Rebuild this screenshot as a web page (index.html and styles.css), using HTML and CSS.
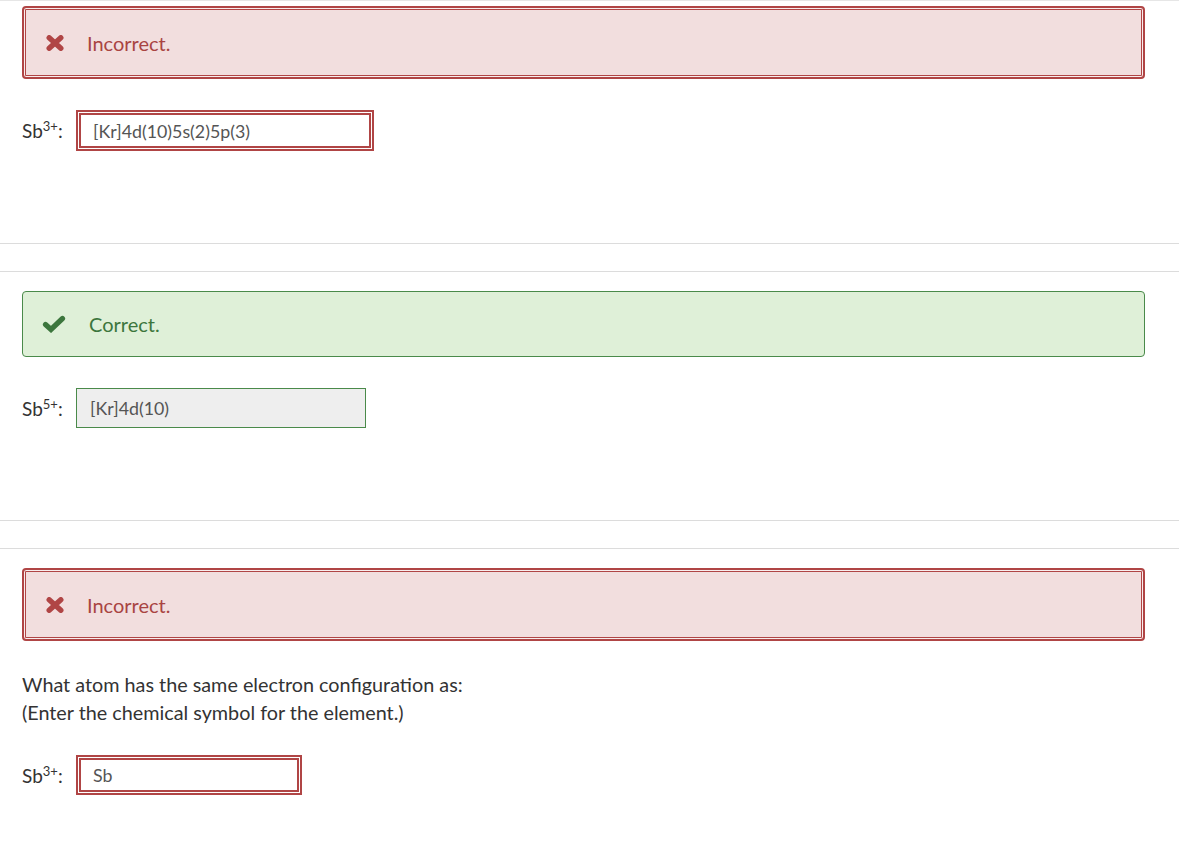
FILE: index.html
```html
<!DOCTYPE html>
<html lang="en">
<head>
    <meta charset="UTF-8">
    <meta name="viewport" content="width=device-width, initial-scale=1.0">
    <title>Electron Configuration</title>
    <link rel="stylesheet" href="styles.css">
</head>
<body>

    <div class="page">
        <div class="question">
            <div class="feedback feedback-incorrect">
                <svg class="icon-times" width="18" height="16" viewBox="0 0 18 16">
                    <path d="M3.2 2.8 L14.8 13.2 M14.8 2.8 L3.2 13.2" stroke="#b04545" stroke-width="5.4" stroke-linecap="round" fill="none"/>
                </svg>
                <span class="feedback-text">Incorrect.</span>
            </div>
            <div class="answer-row">
                <span class="answer-label">Sb<sup>3+</sup>:</span>
                <div class="answer-input input-wrong wide">[Kr]4d(10)5s(2)5p(3)</div>
            </div>
        </div>

        <div class="divider"></div>

        <div class="question">
            <div class="feedback feedback-correct">
                <svg class="icon-check" width="24" height="18" viewBox="0 0 24 18">
                    <path d="M3.5 9.5 L9 14.5 L20.5 3.5" stroke="#3c763d" stroke-width="5.2" stroke-linecap="round" stroke-linejoin="miter" fill="none"/>
                </svg>
                <span class="feedback-text">Correct.</span>
            </div>
            <div class="answer-row">
                <span class="answer-label">Sb<sup>5+</sup>:</span>
                <div class="answer-input input-right">[Kr]4d(10)</div>
            </div>
        </div>

        <div class="divider"></div>

        <div class="question">
            <div class="feedback feedback-incorrect">
                <svg class="icon-times" width="18" height="16" viewBox="0 0 18 16">
                    <path d="M3.2 2.8 L14.8 13.2 M14.8 2.8 L3.2 13.2" stroke="#b04545" stroke-width="5.4" stroke-linecap="round" fill="none"/>
                </svg>
                <span class="feedback-text">Incorrect.</span>
            </div>
            <p class="prompt">What atom has the same electron configuration as:<br>(Enter the chemical symbol for the element.)</p>
            <div class="answer-row last">
                <span class="answer-label">Sb<sup>3+</sup>:</span>
                <div class="answer-input input-wrong narrow">Sb</div>
            </div>
        </div>
    </div>

</body>
</html>
```

FILE: styles.css
```css
body {
    margin: 0;
    padding: 0;
    font-family: Lato, "Open Sans", sans-serif;
    color: #333;
    background-color: #fff;
}
.page {
    border-top: 1px solid #e6e6e6;
}
.question {
    padding: 0 34px 0 22px;
}
.divider {
    height: 27px;
    border-top: 1px solid #dcdcdc;
    border-bottom: 1px solid #dcdcdc;
    margin-bottom: 19px;
}
.feedback {
    display: flex;
    align-items: center;
    box-sizing: border-box;
    border-radius: 4px;
    font-size: 20px;
}
.feedback-incorrect {
    margin-top: 5px;
    height: 73px;
    padding-left: 22px;
    background-color: #f2dede;
    color: #a94442;
    border: 2px solid #b04545;
    box-shadow: inset 0 0 0 1px #f9eded, inset 0 0 0 2px #b04545;
}
.divider + .question .feedback-incorrect {
    margin-top: 0;
}
.feedback-incorrect .feedback-text {
    margin-left: 23px;
}
.feedback-correct {
    height: 66px;
    padding-left: 19px;
    background-color: #dff0d8;
    color: #3c763d;
    border: 1px solid #4a8a4a;
}
.feedback-correct .feedback-text {
    margin-left: 23px;
}
.feedback svg {
    display: block;
    flex-shrink: 0;
}
.answer-row {
    display: flex;
    align-items: center;
    margin-top: 31px;
    margin-bottom: 92px;
}
.answer-row.last {
    margin-top: 29px;
    margin-bottom: 57px;
}
.answer-label {
    width: 54px;
    font-size: 19px;
}
.answer-label sup {
    font-size: 13px;
    line-height: 0;
}
.answer-input {
    box-sizing: border-box;
    height: 40px;
    display: flex;
    align-items: center;
    font-size: 17.8px;
    color: #555;
    padding-left: 13px;
}
.input-wrong {
    height: 41px;
    padding-left: 15px;
    border: 2px solid #b04545;
    box-shadow: inset 0 0 0 1px #fff, inset 0 0 0 3px #b04545;
    background-color: #fff;
}
.input-wrong.wide {
    width: 298px;
}
.input-wrong.narrow {
    height: 40px;
    width: 226px;
}
.input-right {
    width: 290px;
    border: 1px solid #4a8a4a;
    background-color: #eeeeee;
}
.prompt {
    margin: 29px 0 0 0;
    font-size: 19.8px;
    line-height: 28px;
}
```
